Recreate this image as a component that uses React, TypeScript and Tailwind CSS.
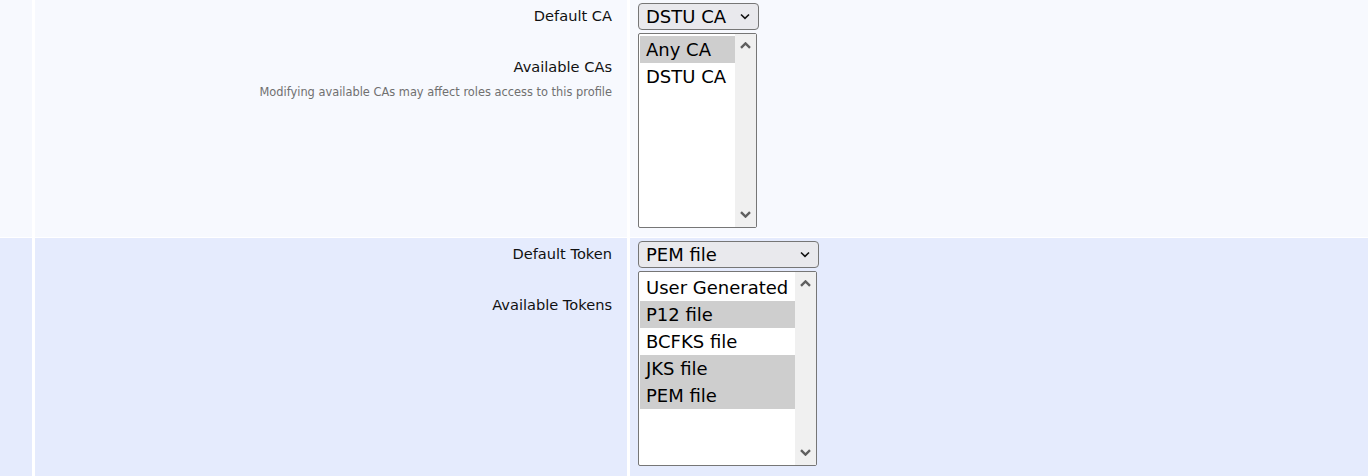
import { ReactNode } from 'react';

type Option = { label: string; selected?: boolean };

const caOptions: Option[] = [
  { label: 'Any CA', selected: true },
  { label: 'DSTU CA' },
];

const tokenOptions: Option[] = [
  { label: 'User Generated' },
  { label: 'P12 file', selected: true },
  { label: 'BCFKS file' },
  { label: 'JKS file', selected: true },
  { label: 'PEM file', selected: true },
];

const Chevron = ({ up = false }: { up?: boolean }) => (
  <svg width="11" height="7" viewBox="0 0 11 7" className={up ? 'rotate-180' : ''}>
    <path d="M1 1.2 L5.5 5.6 L10 1.2" fill="none" stroke="#5f5f5f" strokeWidth="2.4" />
  </svg>
);

const SelectBox = ({ value, width }: { value: string; width: string }) => (
  <div
    className={`${width} flex h-[27px] items-center justify-between rounded-[4px] border border-[#767676] bg-[#e9e9ed] pl-[7px] pr-[8px] text-[18px] leading-none text-black`}
  >
    <span>{value}</span>
    <svg width="10" height="7" viewBox="0 0 10 7">
      <path d="M1 1.5 L5 5.3 L9 1.5" fill="none" stroke="#111" strokeWidth="1.6" />
    </svg>
  </div>
);

const ListBox = ({ options, width }: { options: Option[]; width: string }) => (
  <div className={`${width} mt-[3px] flex h-[195px] rounded-[2px] border border-[#767676] bg-white`}>
    <div className="flex-1 pl-px pt-[2px]">
      {options.map(({ label, selected }) => (
        <div
          key={label}
          className={`h-[27px] whitespace-nowrap pl-[6px] text-[18px] leading-[28px] text-black ${
            selected ? 'bg-[#cecece]' : ''
          }`}
        >
          {label}
        </div>
      ))}
    </div>
    <div className="flex w-[21px] flex-col items-center justify-between bg-[#f0f0f0] pb-[9px] pt-[8px]">
      <Chevron up />
      <Chevron />
    </div>
  </div>
);

const Row = ({
  bg,
  height,
  labels,
  children,
}: {
  bg: string;
  height: string;
  labels: ReactNode;
  children: ReactNode;
}) => (
  <div className={`flex gap-[3px] ${height}`}>
    <div className={`w-[32px] ${bg}`} />
    <div className={`w-[592px] ${bg} flex flex-col items-end pr-[15px] pt-[7px] text-right`}>
      {labels}
    </div>
    <div className={`flex-1 ${bg} pl-[8px] pt-[3px]`}>{children}</div>
  </div>
);

export default function App() {
  return (
    <div
      className="flex h-[476px] w-[1368px] flex-col gap-px overflow-hidden bg-white"
      style={{ fontFamily: '"DejaVu Sans", Verdana, sans-serif' }}
    >
      <Row
        bg="bg-[#f7f9fe]"
        height="h-[237px]"
        labels={
          <>
            <div className="text-[14.6px] leading-[18px] text-[#111]">Default CA</div>
            <div className="mt-[33px] text-[14.6px] leading-[18px] text-[#111]">Available CAs</div>
            <div className="mt-[9px] text-[11.4px] leading-[14px] text-[#707070]">
              Modifying available CAs may affect roles access to this profile
            </div>
          </>
        }
      >
        <SelectBox value="DSTU CA" width="w-[121px]" />
        <ListBox options={caOptions} width="w-[119px]" />
      </Row>
      <Row
        bg="bg-[#e5ebfd]"
        height="h-[238px]"
        labels={
          <>
            <div className="text-[14.6px] leading-[18px] text-[#111]">Default Token</div>
            <div className="mt-[33px] text-[14.6px] leading-[18px] text-[#111]">Available Tokens</div>
          </>
        }
      >
        <SelectBox value="PEM file" width="w-[181px]" />
        <ListBox options={tokenOptions} width="w-[179px]" />
      </Row>
    </div>
  );
}
